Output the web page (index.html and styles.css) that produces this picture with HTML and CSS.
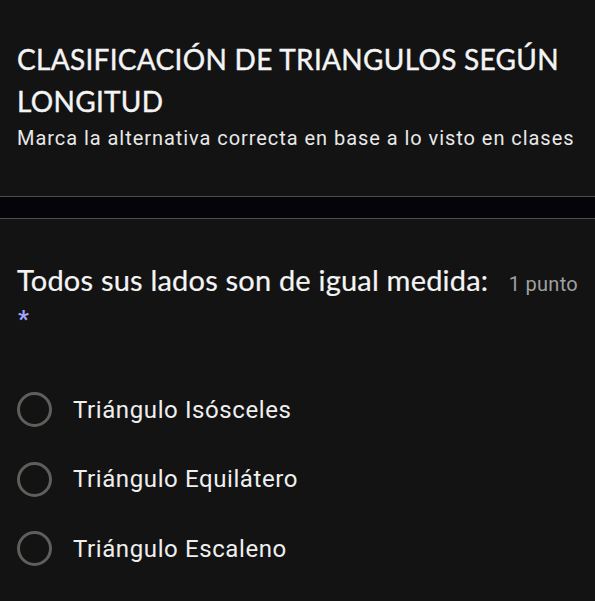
FILE: index.html
```html
<!DOCTYPE html>
<html lang="es">
<head>
  <meta charset="UTF-8">
  <meta name="viewport" content="width=device-width, initial-scale=1.0">
  <title>Clasificación de triangulos</title>
  <link rel="stylesheet" href="styles.css">
</head>
<body>
  <div class="form-header">
    <h1 class="form-title">CLASIFICACIÓN DE TRIANGULOS SEGÚN LONGITUD</h1>
    <p class="form-desc">Marca la alternativa correcta en base a lo visto en clases</p>
  </div>
  <div class="band"></div>
  <div class="question">
    <div class="question-head">
      <span class="question-text">Todos sus lados son de igual medida:</span>
      <span class="points">1 punto</span>
    </div>
    <div class="required">*</div>
    <div class="options">
      <label class="option"><span class="radio"></span>Triángulo Isósceles</label>
      <label class="option"><span class="radio"></span>Triángulo Equilátero</label>
      <label class="option"><span class="radio"></span>Triángulo Escaleno</label>
    </div>
  </div>
</body>
</html>
```

FILE: styles.css
```css
body { margin: 0; background-color: #131313; color: #ededed; font-family: Roboto, "Liberation Sans", sans-serif; }
.form-header { height: 196px; box-sizing: border-box; padding: 38px 17px 0; }
.form-title { margin: 0; font-family: Lato, "Open Sans", sans-serif; font-weight: 400; font-size: 28px; line-height: 42px; letter-spacing: 0.3px; color: #f4f4f4; -webkit-text-stroke: 0.4px #f4f4f4; }
.form-desc { margin: 2px 0 0; font-size: 20px; line-height: 28px; letter-spacing: 0.95px; color: #e8e8e8; }
.band { height: 21px; background-color: #050509; border-top: 1px solid #4a4e4e; border-bottom: 1px solid #4a4e4e; }
.question { padding: 41px 17px 0; }
.question-head { display: flex; align-items: baseline; justify-content: space-between; }
.question-text { font-family: Lato, "Open Sans", sans-serif; font-size: 29px; line-height: 40px; letter-spacing: 0.2px; color: #f4f4f4; -webkit-text-stroke: 0.2px #f4f4f4; }
.points { font-size: 20px; letter-spacing: 0.3px; color: #a0a0a0; }
.required { margin-top: 9px; color: #a3a3ff; font-size: 24px; font-weight: 700; line-height: 20px; padding-left: 1px; }
.options { margin-top: 63px; display: flex; flex-direction: column; gap: 34.5px; }
.option { display: flex; align-items: center; height: 35px; font-size: 24px; letter-spacing: 0.6px; color: #efefef; }
.radio { width: 35px; height: 35px; box-sizing: border-box; border: 3px solid #5e5e5b; border-radius: 50%; margin-right: 21px; }
```
